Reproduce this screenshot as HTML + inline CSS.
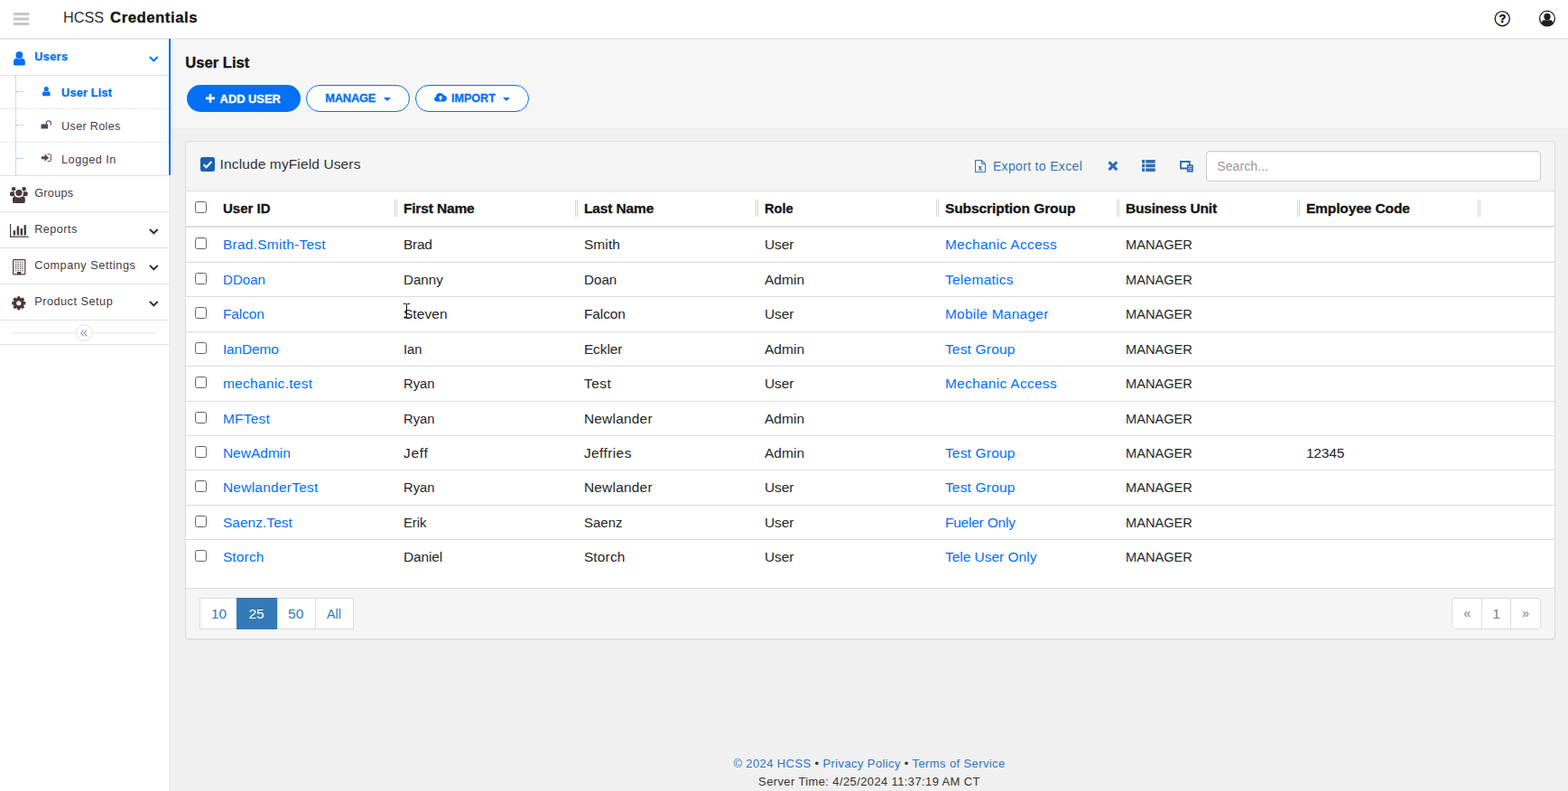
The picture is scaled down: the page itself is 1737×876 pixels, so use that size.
<!DOCTYPE html>
<html lang="en">
<head>
<meta charset="utf-8">
<title>HCSS Credentials - User List</title>
<style>
*{box-sizing:border-box;margin:0;padding:0}
html,body{width:1737px;height:876px;overflow:hidden;background:#f0f0f0;font-family:"Liberation Sans",sans-serif;color:#1e1e1e}
.a{position:absolute}
.t{position:absolute;white-space:nowrap;line-height:1}
svg{position:absolute;overflow:visible}
.cb{position:absolute;width:13px;height:13px;border:1px solid #6a5f6e;border-radius:2.5px;background:#fff}
</style>
</head>
<body>

<div class="a" style="left:0px;top:0px;width:1737px;height:42px;background:#fff"></div>
<div class="a" style="left:0px;top:42px;width:1737px;height:2px;background:linear-gradient(#e4e4e4,#ececec)"></div>
<svg style="left:15px;top:14px" width="18" height="14" viewBox="0 0 18 14"><g fill="#c6c6c6"><rect x="0" y="0" width="17.3" height="3"/><rect x="0" y="5.5" width="17.3" height="3"/><rect x="0" y="11" width="17.3" height="3"/></g></svg>
<div class="t" style="left:70.40px;top:12.00px;font-size:16.8px;color:#2e2e2e;transform:scaleX(0.9687);transform-origin:0 0;">HCSS</div>
<div class="t" style="left:122.00px;top:12.00px;font-size:16.8px;color:#141414;letter-spacing:0.508px;font-weight:bold;-webkit-text-stroke:.3px;">Credentials</div>
<svg style="left:1655px;top:11px" width="19" height="19" viewBox="0 0 19 19"><circle cx="9.25" cy="9.65" r="8.05" fill="#fff" stroke="#1a1a1a" stroke-width="1.35"/><text x="9.3" y="14.1" font-family="Liberation Sans, sans-serif" font-weight="bold" font-size="12.8" text-anchor="middle" fill="#111" stroke="#111" stroke-width=".35">?</text></svg>
<svg style="left:1704px;top:11px" width="20" height="20" viewBox="0 0 20 20"><defs><clipPath id="uc"><circle cx="10" cy="9.55" r="8.4"/></clipPath></defs><circle cx="10" cy="9.55" r="8.4" fill="#fff" stroke="#1a1a1a" stroke-width="1.3"/><circle cx="10" cy="7.4" r="3.65" fill="#1f1f1f"/><path d="M1.500 19L4.400 12.700Q4.900 11.300 6.300 11.300H13.700Q15.100 11.300 15.600 12.700L18.500 19z" fill="#1f1f1f" clip-path="url(#uc)"/></svg>
<div class="a" style="left:0px;top:44px;width:187px;height:832px;background:#fff"></div>
<div class="a" style="left:187px;top:43px;width:2px;height:151px;background:#0370f5"></div>
<div class="a" style="left:187px;top:195px;width:2px;height:681px;background:#ececec"></div>
<div class="a" style="left:0px;top:83px;width:187px;height:1px;background:#e2e2e2"></div>
<div class="a" style="left:0px;top:194px;width:187px;height:1px;background:#e2e2e2"></div>
<div class="a" style="left:0px;top:234px;width:187px;height:1px;background:#e2e2e2"></div>
<div class="a" style="left:0px;top:274px;width:187px;height:1px;background:#e2e2e2"></div>
<div class="a" style="left:0px;top:314px;width:187px;height:1px;background:#e2e2e2"></div>
<div class="a" style="left:0px;top:354px;width:187px;height:1px;background:#e2e2e2"></div>
<div class="a" style="left:0px;top:381px;width:187px;height:1px;background:#e2e2e2"></div>
<div class="a" style="left:0px;top:120px;width:187px;height:1px;border-top:1px dotted #d9d9d9"></div>
<div class="a" style="left:0px;top:157px;width:187px;height:1px;border-top:1px dotted #d9d9d9"></div>
<div class="a" style="left:17px;top:84px;width:1px;height:110px;border-left:1px dotted #8dbaf0"></div>
<div class="a" style="left:18px;top:101px;width:8px;height:1px;border-top:1px dotted #8dbaf0"></div>
<div class="a" style="left:18px;top:138px;width:8px;height:1px;border-top:1px dotted #8dbaf0"></div>
<div class="a" style="left:18px;top:175px;width:8px;height:1px;border-top:1px dotted #8dbaf0"></div>
<svg style="left:14.700px;top:56.900px" width="12.800" height="15.500" viewBox="0 0 12.800 15.500"><circle cx="6.400" cy="4" r="3.950" fill="#0370f5"/><path d="M0 14.300V11.500C0 9 1.600 7.600 3.500 7.500 4.300 8.200 5.300 8.500 6.400 8.500S8.500 8.200 9.300 7.500C11.200 7.600 12.800 9 12.800 11.500V14.300C12.800 15 12.300 15.500 11.600 15.500H1.200C.5 15.500 0 15 0 14.300Z" fill="#0370f5"/></svg>
<div class="t" style="left:38.20px;top:57.00px;font-size:12.7px;color:#0370f5;letter-spacing:0.373px;font-weight:bold;-webkit-text-stroke:.3px;">Users</div>
<svg style="left:165px;top:62px" width="11" height="7" viewBox="0 0 11 7"><path d="M.8 .9L5.300 5.300 9.800 .9" fill="none" stroke="#0370f5" stroke-width="2"/></svg>
<svg style="left:46.900px;top:95.500px" width="8.600" height="10.300" viewBox="0 0 8.600 10.300"><circle cx="4.300" cy="2.550" r="2.550" fill="#0370f5"/><path d="M0 9.500V7.600C0 6 1.100 5.100 2.300 5 2.900 5.500 3.500 5.700 4.300 5.700S5.700 5.500 6.300 5C7.500 5.100 8.600 6 8.600 7.600V9.500C8.600 10 8.300 10.300 7.800 10.300H.8C.3 10.300 0 10 0 9.500Z" fill="#0370f5"/></svg>
<div class="t" style="left:68.00px;top:97.00px;font-size:12.7px;color:#0370f5;letter-spacing:0.218px;font-weight:bold;-webkit-text-stroke:.3px;">User List</div>
<svg style="left:45px;top:132.500px" width="13" height="10" viewBox="0 0 13 10"><rect x=".5" y="4.500" width="7.650" height="5" rx=".5" fill="#5a3d5c"/><path d="M6.300 4.700V3.250a2.500 2.500 0 0 1 5 0V5.400" fill="none" stroke="#5a3d5c" stroke-width="1.150"/></svg>
<div class="t" style="left:68.10px;top:134.00px;font-size:12.7px;color:#4b3b50;letter-spacing:0.278px;">User Roles</div>
<svg style="left:45.500px;top:170px" width="12" height="10" viewBox="0 0 12 10"><path d="M0 3.200h3.600V.6L8.100 4.700 3.600 8.800V6.200H0z" fill="#5a3d5c"/><path d="M6.600 .8h2.500q1.300 0 1.300 1.300v5.200q0 1.300-1.300 1.300H6.600" fill="none" stroke="#5a3d5c" stroke-width=".95"/></svg>
<div class="t" style="left:68.10px;top:171.00px;font-size:12.7px;color:#4b3b50;letter-spacing:0.473px;">Logged In</div>
<svg style="left:11px;top:206.500px" width="20" height="18" viewBox="0 0 20 18"><g fill="#48393a"><circle cx="4.100" cy="2.300" r="2.250"/><circle cx="15.600" cy="2.300" r="2.250"/><circle cx="9.900" cy="6.500" r="3.600"/><path d="M1.600 5.300h3.600c-.5.900-.6 1.900-.3 3 .2.700.5 1.300 1 1.900H1.700C.6 10.200 0 9.600 0 8.500V7c0-1 .7-1.700 1.600-1.700z"/><path d="M18.100 5.300h-3.600c.5.900.6 1.900.3 3-.2.700-.5 1.300-1 1.900h4.200c1.100 0 1.700-.6 1.700-1.700V7c0-1-.7-1.700-1.600-1.700z"/><path d="M3 16.200V13c0-1.400 1-2.400 2.400-2.400h.8c1.100.8 2.300 1.200 3.700 1.200s2.600-.4 3.700-1.200h.8c1.400 0 2.400 1 2.400 2.400v3.200c0 1.100-.7 1.800-1.800 1.800H4.800C3.700 18 3 17.300 3 16.200z"/></g></svg>
<div class="t" style="left:38.20px;top:208.00px;font-size:12.7px;color:#48393a;letter-spacing:0.269px;">Groups</div>
<svg style="left:10.500px;top:248px" width="21" height="15" viewBox="0 0 21 15"><g fill="#48393a"><rect x="0" y="0" width="1.200" height="14.800"/><rect x="0" y="13.600" width="20.700" height="1.200"/><rect x="3.700" y="7.200" width="2.400" height="5.300"/><rect x="7.700" y="2.500" width="2.400" height="10"/><rect x="11.600" y="5" width="2.400" height="7.500"/><rect x="15.500" y="1.200" width="2.400" height="11.300"/></g></svg>
<div class="t" style="left:38.20px;top:248.00px;font-size:12.7px;color:#48393a;letter-spacing:0.453px;">Reports</div>
<svg style="left:165px;top:253px" width="11" height="7" viewBox="0 0 11 7"><path d="M.8 .9L5.300 5.300 9.800 .9" fill="none" stroke="#3a2b2c" stroke-width="2"/></svg>
<svg style="left:13.700px;top:287px" width="15" height="18" viewBox="0 0 15 18"><rect x=".6" y=".6" width="13.200" height="16.200" rx=".7" fill="#fff" stroke="#48393a" stroke-width="1.200"/><g fill="#75656c"><rect x="2.90" y="2.60" width="1.450" height="1.450"/><rect x="5.35" y="2.60" width="1.450" height="1.450"/><rect x="7.80" y="2.60" width="1.450" height="1.450"/><rect x="10.25" y="2.60" width="1.450" height="1.450"/><rect x="2.90" y="4.90" width="1.450" height="1.450"/><rect x="5.35" y="4.90" width="1.450" height="1.450"/><rect x="7.80" y="4.90" width="1.450" height="1.450"/><rect x="10.25" y="4.90" width="1.450" height="1.450"/><rect x="2.90" y="7.20" width="1.450" height="1.450"/><rect x="5.35" y="7.20" width="1.450" height="1.450"/><rect x="7.80" y="7.20" width="1.450" height="1.450"/><rect x="10.25" y="7.20" width="1.450" height="1.450"/><rect x="2.90" y="9.50" width="1.450" height="1.450"/><rect x="5.35" y="9.50" width="1.450" height="1.450"/><rect x="7.80" y="9.50" width="1.450" height="1.450"/><rect x="10.25" y="9.50" width="1.450" height="1.450"/><rect x="2.90" y="11.80" width="1.450" height="1.450"/><rect x="5.35" y="11.80" width="1.450" height="1.450"/><rect x="7.80" y="11.80" width="1.450" height="1.450"/><rect x="10.25" y="11.80" width="1.450" height="1.450"/></g><rect x="5" y="14" width="4.400" height="3" fill="#48393a"/></svg>
<div class="t" style="left:38.20px;top:288.00px;font-size:12.7px;color:#48393a;letter-spacing:0.536px;">Company Settings</div>
<svg style="left:165px;top:293px" width="11" height="7" viewBox="0 0 11 7"><path d="M.8 .9L5.300 5.300 9.800 .9" fill="none" stroke="#3a2b2c" stroke-width="2"/></svg>
<svg style="left:13.200px;top:327.800px" width="15.500" height="15.500" viewBox="0 0 16 16"><g fill="#48393a"><circle cx="8" cy="8" r="6.200"/><rect x="6.300" y=".2" width="3.400" height="15.600" rx=".5" transform="rotate(0 8 8)"/><rect x="6.300" y=".2" width="3.400" height="15.600" rx=".5" transform="rotate(45 8 8)"/><rect x="6.300" y=".2" width="3.400" height="15.600" rx=".5" transform="rotate(90 8 8)"/><rect x="6.300" y=".2" width="3.400" height="15.600" rx=".5" transform="rotate(135 8 8)"/></g><circle cx="8" cy="8" r="2.700" fill="#fff"/></svg>
<div class="t" style="left:38.20px;top:328.00px;font-size:12.7px;color:#48393a;letter-spacing:0.509px;">Product Setup</div>
<svg style="left:165px;top:333px" width="11" height="7" viewBox="0 0 11 7"><path d="M.8 .9L5.300 5.300 9.800 .9" fill="none" stroke="#3a2b2c" stroke-width="2"/></svg>
<div class="a" style="left:14px;top:368px;width:158px;height:1px;background:#e6e6e6"></div>
<div class="a" style="left:83.5px;top:358.5px;width:19.6px;height:19.6px;border-radius:10px;border:1px solid #e3e3e3;background:#fff"></div>
<svg style="left:89.300px;top:365.300px" width="8" height="8" viewBox="0 0 8 8"><path d="M3.700 .6L.8 4 3.700 7.400M7.100 .6L4.200 4l2.900 3.400" fill="none" stroke="#8d89ad" stroke-width="1.050"/></svg>
<div class="a" style="left:189px;top:44px;width:1548px;height:98px;background:#f6f6f6"></div>
<div class="a" style="left:189px;top:142px;width:1548px;height:3px;background:linear-gradient(#ebebeb,#f0f0f0)"></div>
<div class="t" style="left:205.20px;top:62.00px;font-size:16.6px;color:#141414;letter-spacing:0.019px;font-weight:bold;-webkit-text-stroke:.3px;">User List</div>
<div class="a" style="left:207px;top:94px;width:126px;height:30px;border-radius:15px;background:#0370f5"></div>
<svg style="left:228px;top:103.700px" width="10" height="10" viewBox="0 0 10 10"><path d="M5 0v9.800M0 4.900h10" stroke="#fff" stroke-width="2.600" fill="none"/></svg>
<div class="t" style="left:243.60px;top:104.00px;font-size:12.9px;color:#fff;letter-spacing:-0.010px;font-weight:bold;-webkit-text-stroke:.3px;">ADD USER</div>
<div class="a" style="left:339px;top:94px;width:115px;height:30px;border-radius:15px;background:#fff;border:1px solid #0370f5"></div>
<div class="t" style="left:360.20px;top:103.00px;font-size:12.9px;color:#0370f5;letter-spacing:-0.208px;font-weight:bold;-webkit-text-stroke:.3px;">MANAGE</div>
<svg style="left:425px;top:108.200px" width="8" height="4" viewBox="0 0 8 4"><path d="M0 0h8L4 4z" fill="#0370f5"/></svg>
<div class="a" style="left:460px;top:94px;width:126px;height:30px;border-radius:15px;background:#fff;border:1px solid #0370f5"></div>
<svg style="left:481px;top:103.400px" width="14" height="10" viewBox="0 0 14 10"><path d="M3.200 9.600C1.400 9.600 0 8.400 0 6.800c0-1.200.7-2.200 1.900-2.600C2 2 3.900.1 6.400.1c1.800 0 3.400 1 4.100 2.500C12.500 2.700 14 4.200 14 6.100c0 2-1.600 3.500-3.600 3.500z" fill="#0370f5"/><path d="M7 2.700l2.700 2.900H8v2.400H6V5.600H4.300z" fill="#fff"/></svg>
<div class="t" style="left:499.50px;top:103.00px;font-size:12.9px;color:#0370f5;transform:scaleX(0.9745);transform-origin:0 0;font-weight:bold;-webkit-text-stroke:.3px;">IMPORT</div>
<svg style="left:557.200px;top:108.200px" width="8" height="4" viewBox="0 0 8 4"><path d="M0 0h8L4 4z" fill="#0370f5"/></svg>
<div class="a" style="left:205px;top:156px;width:1518px;height:552px;background:#f5f5f5;border:1px solid #dcdcdc;border-radius:4px;box-shadow:0 1px 1px rgba(0,0,0,.06)"></div>
<div class="a" style="left:206px;top:211px;width:1516px;height:1px;background:#dddddd"></div>
<div class="a" style="left:206px;top:212px;width:1516px;height:439px;background:#fff"></div>
<div class="a" style="left:206px;top:250px;width:1516px;height:2px;background:#dddddd"></div>
<div class="a" style="left:206px;top:651px;width:1516px;height:1px;background:#dddddd"></div>
<div class="a" style="left:222px;top:174px;width:16px;height:16px;border-radius:2.500px;background:#1a5fb4"></div>
<svg style="left:222px;top:174px" width="16" height="16" viewBox="0 0 16 16"><path d="M3.600 8.300l2.900 2.900 5.900-6.100" fill="none" stroke="#fff" stroke-width="2.100"/></svg>
<div class="t" style="left:243.60px;top:174.00px;font-size:15.5px;color:#333;letter-spacing:0.123px;">Include myField Users</div>
<svg style="left:1080px;top:177px" width="12" height="14" viewBox="0 0 12 14"><path d="M.55.550h6.900l4 4v8.900H.55z" fill="#fff" stroke="#3a74b8" stroke-width="1.100"/><path d="M7.450.550v4h4" fill="none" stroke="#3a74b8" stroke-width="1"/><text x="5.700" y="11.700" font-family="Liberation Serif, serif" font-weight="bold" font-size="10" text-anchor="middle" fill="#2f6bb3">x</text></svg>
<div class="t" style="left:1099.90px;top:177.00px;font-size:14px;color:#3a74b8;letter-spacing:0.339px;">Export to Excel</div>
<svg style="left:1227px;top:178.300px" width="12" height="12" viewBox="0 0 12 12"><path d="M1.500 1.400l8.800 8.800M10.300 1.400l-8.800 8.800" stroke="#2e6db4" stroke-width="3.200" fill="none"/></svg>
<svg style="left:1265.300px;top:177.300px" width="15" height="13" viewBox="0 0 15 13"><g fill="#2e6db4"><rect x="0" y="0" width="3.200" height="3.600"/><rect x="4.300" y="0" width="10.400" height="3.600"/><rect x="0" y="4.700" width="3.200" height="3.600"/><rect x="4.300" y="4.700" width="10.400" height="3.600"/><rect x="0" y="9.400" width="3.200" height="3.600"/><rect x="4.300" y="9.400" width="10.400" height="3.600"/></g></svg>
<svg style="left:1307px;top:177.500px" width="15" height="13" viewBox="0 0 15 13"><path d="M1 1h9.800v7.500H1z" fill="#fff" stroke="#2e6db4" stroke-width="1.900"/><rect x="7.800" y="4.400" width="7" height="8.200" fill="#2e6db4"/><path d="M9.300 6.500h4M9.300 8.400h4M9.300 10.300h4" stroke="#dbe7f4" stroke-width=".8"/></svg>
<div class="a" style="left:1336px;top:167px;width:371px;height:34px;border:1px solid #cccccc;border-radius:4px;background:#fff;box-shadow:inset 0 1px 1px rgba(0,0,0,.06)"></div>
<div class="t" style="left:1348.20px;top:177.00px;font-size:14px;color:#999;letter-spacing:0.121px;">Search...</div>
<div class="cb" style="left:216px;top:223px"></div>
<div class="t" style="left:246.90px;top:223.00px;font-size:15.5px;color:#131313;transform:scaleX(0.9671);transform-origin:0 0;font-weight:bold;-webkit-text-stroke:.3px;">User ID</div>
<div class="t" style="left:446.90px;top:223.00px;font-size:15.5px;color:#131313;letter-spacing:-0.150px;font-weight:bold;-webkit-text-stroke:.3px;">First Name</div>
<div class="t" style="left:646.90px;top:223.00px;font-size:15.5px;color:#131313;letter-spacing:-0.111px;font-weight:bold;-webkit-text-stroke:.3px;">Last Name</div>
<div class="t" style="left:846.90px;top:223.00px;font-size:15.5px;color:#131313;transform:scaleX(0.9450);transform-origin:0 0;font-weight:bold;-webkit-text-stroke:.3px;">Role</div>
<div class="t" style="left:1046.90px;top:223.00px;font-size:15.5px;color:#131313;letter-spacing:-0.061px;font-weight:bold;-webkit-text-stroke:.3px;">Subscription Group</div>
<div class="t" style="left:1246.90px;top:223.00px;font-size:15.5px;color:#131313;letter-spacing:-0.175px;font-weight:bold;-webkit-text-stroke:.3px;">Business Unit</div>
<div class="t" style="left:1446.90px;top:223.00px;font-size:15.5px;color:#131313;letter-spacing:-0.107px;font-weight:bold;-webkit-text-stroke:.3px;">Employee Code</div>
<div class="a" style="left:437px;top:221px;width:3px;height:19px;border-left:1px solid #d6d6d6;border-right:1px solid #d6d6d6"></div>
<div class="a" style="left:637px;top:221px;width:3px;height:19px;border-left:1px solid #d6d6d6;border-right:1px solid #d6d6d6"></div>
<div class="a" style="left:837px;top:221px;width:3px;height:19px;border-left:1px solid #d6d6d6;border-right:1px solid #d6d6d6"></div>
<div class="a" style="left:1037px;top:221px;width:3px;height:19px;border-left:1px solid #d6d6d6;border-right:1px solid #d6d6d6"></div>
<div class="a" style="left:1237px;top:221px;width:3px;height:19px;border-left:1px solid #d6d6d6;border-right:1px solid #d6d6d6"></div>
<div class="a" style="left:1437px;top:221px;width:3px;height:19px;border-left:1px solid #d6d6d6;border-right:1px solid #d6d6d6"></div>
<div class="a" style="left:1637px;top:221px;width:3px;height:19px;border-left:1px solid #d6d6d6;border-right:1px solid #d6d6d6"></div>
<div class="cb" style="left:216px;top:263px"></div>
<div class="t" style="left:246.90px;top:263.00px;font-size:15.5px;color:#0370f5;letter-spacing:0.250px;">Brad.Smith-Test</div>
<div class="t" style="left:446.90px;top:263.00px;font-size:15.5px;color:#262626;letter-spacing:-0.248px;">Brad</div>
<div class="t" style="left:646.90px;top:263.00px;font-size:15.5px;color:#262626;letter-spacing:0.099px;">Smith</div>
<div class="t" style="left:846.90px;top:263.00px;font-size:15.5px;color:#262626;letter-spacing:-0.081px;">User</div>
<div class="t" style="left:1046.90px;top:263.00px;font-size:15.5px;color:#0370f5;letter-spacing:0.287px;">Mechanic Access</div>
<div class="t" style="left:1246.90px;top:263.00px;font-size:15.5px;color:#262626;transform:scaleX(0.9413);transform-origin:0 0;">MANAGER</div>
<div class="a" style="left:206px;top:290px;width:1516px;height:1px;background:#dddddd"></div>
<div class="cb" style="left:216px;top:302px"></div>
<div class="t" style="left:246.90px;top:302.00px;font-size:15.5px;color:#0370f5;transform:scaleX(0.9721);transform-origin:0 0;">DDoan</div>
<div class="t" style="left:446.90px;top:302.00px;font-size:15.5px;color:#262626;transform:scaleX(0.9767);transform-origin:0 0;">Danny</div>
<div class="t" style="left:646.90px;top:302.00px;font-size:15.5px;color:#262626;transform:scaleX(0.9785);transform-origin:0 0;">Doan</div>
<div class="t" style="left:846.90px;top:302.00px;font-size:15.5px;color:#262626;letter-spacing:0.077px;">Admin</div>
<div class="t" style="left:1046.90px;top:302.00px;font-size:15.5px;color:#0370f5;letter-spacing:0.279px;">Telematics</div>
<div class="t" style="left:1246.90px;top:302.00px;font-size:15.5px;color:#262626;transform:scaleX(0.9413);transform-origin:0 0;">MANAGER</div>
<div class="a" style="left:206px;top:328px;width:1516px;height:1px;background:#dddddd"></div>
<div class="cb" style="left:216px;top:340px"></div>
<div class="t" style="left:246.90px;top:340.00px;font-size:15.5px;color:#0370f5;letter-spacing:-0.088px;">Falcon</div>
<div class="t" style="left:446.90px;top:340.00px;font-size:15.5px;color:#262626;letter-spacing:0.101px;">Steven</div>
<div class="t" style="left:646.90px;top:340.00px;font-size:15.5px;color:#262626;letter-spacing:-0.088px;">Falcon</div>
<div class="t" style="left:846.90px;top:340.00px;font-size:15.5px;color:#262626;letter-spacing:-0.081px;">User</div>
<div class="t" style="left:1046.90px;top:340.00px;font-size:15.5px;color:#0370f5;letter-spacing:0.259px;">Mobile Manager</div>
<div class="t" style="left:1246.90px;top:340.00px;font-size:15.5px;color:#262626;transform:scaleX(0.9413);transform-origin:0 0;">MANAGER</div>
<div class="a" style="left:206px;top:367px;width:1516px;height:1px;background:#dddddd"></div>
<div class="cb" style="left:216px;top:379px"></div>
<div class="t" style="left:246.90px;top:379.00px;font-size:15.5px;color:#0370f5;letter-spacing:-0.165px;">IanDemo</div>
<div class="t" style="left:446.90px;top:379.00px;font-size:15.5px;color:#262626;transform:scaleX(0.9515);transform-origin:0 0;">Ian</div>
<div class="t" style="left:646.90px;top:379.00px;font-size:15.5px;color:#262626;letter-spacing:-0.110px;">Eckler</div>
<div class="t" style="left:846.90px;top:379.00px;font-size:15.5px;color:#262626;letter-spacing:0.077px;">Admin</div>
<div class="t" style="left:1046.90px;top:379.00px;font-size:15.5px;color:#0370f5;letter-spacing:0.185px;">Test Group</div>
<div class="t" style="left:1246.90px;top:379.00px;font-size:15.5px;color:#262626;transform:scaleX(0.9413);transform-origin:0 0;">MANAGER</div>
<div class="a" style="left:206px;top:405px;width:1516px;height:1px;background:#dddddd"></div>
<div class="cb" style="left:216px;top:417px"></div>
<div class="t" style="left:246.90px;top:417.00px;font-size:15.5px;color:#0370f5;letter-spacing:0.301px;">mechanic.test</div>
<div class="t" style="left:446.90px;top:417.00px;font-size:15.5px;color:#262626;transform:scaleX(0.9532);transform-origin:0 0;">Ryan</div>
<div class="t" style="left:646.90px;top:417.00px;font-size:15.5px;color:#262626;letter-spacing:0.519px;">Test</div>
<div class="t" style="left:846.90px;top:417.00px;font-size:15.5px;color:#262626;letter-spacing:-0.081px;">User</div>
<div class="t" style="left:1046.90px;top:417.00px;font-size:15.5px;color:#0370f5;letter-spacing:0.287px;">Mechanic Access</div>
<div class="t" style="left:1246.90px;top:417.00px;font-size:15.5px;color:#262626;transform:scaleX(0.9413);transform-origin:0 0;">MANAGER</div>
<div class="a" style="left:206px;top:444px;width:1516px;height:1px;background:#dddddd"></div>
<div class="cb" style="left:216px;top:456px"></div>
<div class="t" style="left:246.90px;top:456.00px;font-size:15.5px;color:#0370f5;letter-spacing:0.240px;">MFTest</div>
<div class="t" style="left:446.90px;top:456.00px;font-size:15.5px;color:#262626;transform:scaleX(0.9532);transform-origin:0 0;">Ryan</div>
<div class="t" style="left:646.90px;top:456.00px;font-size:15.5px;color:#262626;letter-spacing:0.201px;">Newlander</div>
<div class="t" style="left:846.90px;top:456.00px;font-size:15.5px;color:#262626;letter-spacing:0.077px;">Admin</div>
<div class="t" style="left:1246.90px;top:456.00px;font-size:15.5px;color:#262626;transform:scaleX(0.9413);transform-origin:0 0;">MANAGER</div>
<div class="a" style="left:206px;top:482px;width:1516px;height:1px;background:#dddddd"></div>
<div class="cb" style="left:216px;top:494px"></div>
<div class="t" style="left:246.90px;top:494.00px;font-size:15.5px;color:#0370f5;letter-spacing:0.008px;">NewAdmin</div>
<div class="t" style="left:446.90px;top:494.00px;font-size:15.5px;color:#262626;letter-spacing:0.759px;">Jeff</div>
<div class="t" style="left:646.90px;top:494.00px;font-size:15.5px;color:#262626;letter-spacing:0.403px;">Jeffries</div>
<div class="t" style="left:846.90px;top:494.00px;font-size:15.5px;color:#262626;letter-spacing:0.077px;">Admin</div>
<div class="t" style="left:1046.90px;top:494.00px;font-size:15.5px;color:#0370f5;letter-spacing:0.185px;">Test Group</div>
<div class="t" style="left:1246.90px;top:494.00px;font-size:15.5px;color:#262626;transform:scaleX(0.9413);transform-origin:0 0;">MANAGER</div>
<div class="t" style="left:1446.90px;top:494.00px;font-size:15.5px;color:#262626;letter-spacing:-0.148px;">12345</div>
<div class="a" style="left:206px;top:520px;width:1516px;height:1px;background:#dddddd"></div>
<div class="cb" style="left:216px;top:532px"></div>
<div class="t" style="left:246.90px;top:532.00px;font-size:15.5px;color:#0370f5;letter-spacing:0.247px;">NewlanderTest</div>
<div class="t" style="left:446.90px;top:532.00px;font-size:15.5px;color:#262626;transform:scaleX(0.9532);transform-origin:0 0;">Ryan</div>
<div class="t" style="left:646.90px;top:532.00px;font-size:15.5px;color:#262626;letter-spacing:0.201px;">Newlander</div>
<div class="t" style="left:846.90px;top:532.00px;font-size:15.5px;color:#262626;letter-spacing:-0.081px;">User</div>
<div class="t" style="left:1046.90px;top:532.00px;font-size:15.5px;color:#0370f5;letter-spacing:0.185px;">Test Group</div>
<div class="t" style="left:1246.90px;top:532.00px;font-size:15.5px;color:#262626;transform:scaleX(0.9413);transform-origin:0 0;">MANAGER</div>
<div class="a" style="left:206px;top:559px;width:1516px;height:1px;background:#dddddd"></div>
<div class="cb" style="left:216px;top:571px"></div>
<div class="t" style="left:246.90px;top:571.00px;font-size:15.5px;color:#0370f5;letter-spacing:0.035px;">Saenz.Test</div>
<div class="t" style="left:446.90px;top:571.00px;font-size:15.5px;color:#262626;transform:scaleX(0.9537);transform-origin:0 0;">Erik</div>
<div class="t" style="left:646.90px;top:571.00px;font-size:15.5px;color:#262626;transform:scaleX(0.9672);transform-origin:0 0;">Saenz</div>
<div class="t" style="left:846.90px;top:571.00px;font-size:15.5px;color:#262626;letter-spacing:-0.081px;">User</div>
<div class="t" style="left:1046.90px;top:571.00px;font-size:15.5px;color:#0370f5;letter-spacing:-0.210px;">Fueler Only</div>
<div class="t" style="left:1246.90px;top:571.00px;font-size:15.5px;color:#262626;transform:scaleX(0.9413);transform-origin:0 0;">MANAGER</div>
<div class="a" style="left:206px;top:597px;width:1516px;height:1px;background:#dddddd"></div>
<div class="cb" style="left:216px;top:609px"></div>
<div class="t" style="left:246.90px;top:609.00px;font-size:15.5px;color:#0370f5;letter-spacing:0.141px;">Storch</div>
<div class="t" style="left:446.90px;top:609.00px;font-size:15.5px;color:#262626;letter-spacing:-0.139px;">Daniel</div>
<div class="t" style="left:646.90px;top:609.00px;font-size:15.5px;color:#262626;letter-spacing:0.141px;">Storch</div>
<div class="t" style="left:846.90px;top:609.00px;font-size:15.5px;color:#262626;letter-spacing:-0.081px;">User</div>
<div class="t" style="left:1046.90px;top:609.00px;font-size:15.5px;color:#0370f5;letter-spacing:-0.011px;">Tele User Only</div>
<div class="t" style="left:1246.90px;top:609.00px;font-size:15.5px;color:#262626;transform:scaleX(0.9413);transform-origin:0 0;">MANAGER</div>
<svg style="left:447px;top:336px" width="7" height="17" viewBox="0 0 7 17"><path d="M0 .5h2.700M4.300 .5H7M0 16h2.700M4.300 16H7M3.500 .8v15" stroke="#111" stroke-width="1" fill="none"/><path d="M2.500 .5L3.500 1.200 4.500 .5M2.500 16L3.500 15.300 4.500 16" stroke="#111" stroke-width=".8" fill="none"/></svg>
<div class="a" style="left:221px;top:662px;width:42px;height:35px;background:#fff;border:1px solid #dddddd;"></div>
<div class="a" style="left:307px;top:662px;width:43px;height:35px;background:#fff;border:1px solid #dddddd;"></div>
<div class="a" style="left:349px;top:662px;width:43px;height:35px;background:#fff;border:1px solid #dddddd;"></div>
<div class="a" style="left:262px;top:662px;width:45px;height:35px;background:#337ab7;border:1px solid #337ab7;"></div>
<div class="t" style="left:234.00px;top:672.00px;font-size:15.5px;color:#337ab7;">10</div>
<div class="t" style="left:275.40px;top:672.00px;font-size:15.5px;color:#fff;letter-spacing:0.056px;">25</div>
<div class="t" style="left:318.90px;top:672.00px;font-size:15.5px;color:#337ab7;letter-spacing:0.256px;">50</div>
<div class="t" style="left:362.40px;top:672.00px;font-size:15.5px;color:#337ab7;transform:scaleX(0.9279);transform-origin:0 0;">All</div>
<div class="a" style="left:1608px;top:662px;width:99px;height:35px;background:#fff;border:1px solid #dddddd;border-radius:4px"></div>
<div class="a" style="left:1641px;top:663px;width:1px;height:33px;background:#dddddd"></div>
<div class="a" style="left:1673px;top:663px;width:1px;height:33px;background:#dddddd"></div>
<div class="t" style="left:1621.20px;top:672.00px;font-size:14px;color:#6f7f9e;">«</div>
<div class="t" style="left:1653.20px;top:672.00px;font-size:15.5px;color:#6f7f9e;">1</div>
<div class="t" style="left:1686.20px;top:672.00px;font-size:14px;color:#6f7f9e;">»</div>
<div class="t" style="left:189px;width:1548px;text-align:center;top:838.500px;font-size:13px;color:#333;letter-spacing:.39px"><span style="color:#2f72c4">© 2024 HCSS</span> • <span style="color:#2f72c4">Privacy Policy</span> • <span style="color:#2f72c4">Terms of Service</span></div>
<div class="t" style="left:189px;width:1548px;text-align:center;top:858.500px;font-size:13px;color:#333;letter-spacing:.38px">Server Time: 4/25/2024 11:37:19 AM CT</div>
</body>
</html>
